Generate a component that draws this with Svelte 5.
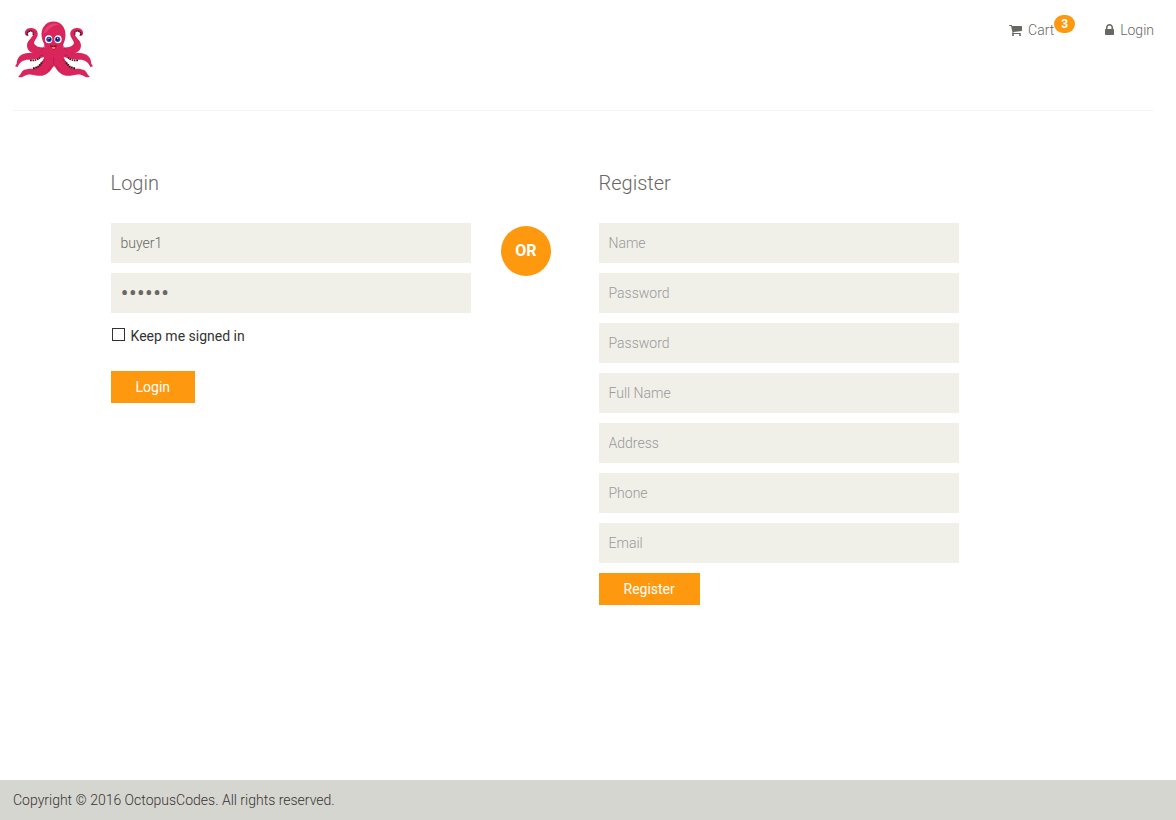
<script lang="ts">
	interface Field {
		name: string;
		label: string;
		type: string;
	}

	const fields: Field[] = [
		{ name: 'username', label: 'Name', type: 'text' },
		{ name: 'password', label: 'Password', type: 'password' },
		{ name: 'confirm', label: 'Password', type: 'password' },
		{ name: 'fullName', label: 'Full Name', type: 'text' },
		{ name: 'address', label: 'Address', type: 'text' },
		{ name: 'phone', label: 'Phone', type: 'text' },
		{ name: 'email', label: 'Email', type: 'email' }
	];

	let username = 'buyer1';
	let password = 'buyer1';
	let keepSignedIn = false;
	let cartCount = 3;
</script>

<div class="page">
	<header class="container">
		<div class="header-middle">
			<a class="logo" href="/" aria-label="Home">
				<svg viewBox="6 3 240 180" width="80" height="60">
					<defs>
						<g id="arms">
							<path fill="#d9245c" d="M104 88C88 90 72 87 67 78C64 70 74 63 77 51C79 38 69 29 56 30C44 30 37 39 39 48C41 53 46 55 50 53C45 48 48 42 55 40C63 40 66 46 62 53C57 62 46 68 45 82C45 97 55 105 72 107L108 112Z" />
							<path fill="none" stroke="#311018" stroke-width="4" stroke-dasharray="4 2" d="M46 51C43 43 51 38 57 39C63 39 65 45 63 50" />
							<path fill="#d9245c" d="M102 94C82 108 66 103 49 105C27 106 15 118 14 137L9 145L17 147C23 132 34 125 49 125C68 126 88 119 108 115Z" />
							<path fill="none" stroke="#481322" stroke-width="5" stroke-dasharray="5 2" d="M54 127Q73 129 84 119" />
							<path fill="#d9245c" d="M102 110C90 128 85 148 66 152C48 152 33 153 28 164C24 172 18 175 19 177C28 181 35 173 46 170C61 167 76 176 91 173C108 169 119 156 126 140V108Z" />
							<path fill="none" stroke="#311018" stroke-width="6" stroke-dasharray="5 2" d="M63 151Q82 149 91 130" />
							<path fill="none" stroke="#a91641" stroke-width="2" d="M84 114Q98 112 103 103M94 132Q101 125 105 116M109 157Q119 146 123 134" />
						</g>
					</defs>
					<use href="#arms" />
					<use href="#arms" transform="translate(252 0) scale(-1 1)" />
					<path fill="#d9245c" d="M99 82C88 65 84 43 95 26C107 5 142 5 154 26C164 43 162 65 152 82L158 112Q149 136 126 146Q102 136 93 112Z" />
					<path fill="#e53e70" d="M101 31Q117 10 141 20Q122 20 106 40Q96 50 95 43Z" />
					<ellipse cx="110" cy="64" rx="11" ry="12" fill="#fff" />
					<ellipse cx="138" cy="64" rx="11" ry="12" fill="#fff" />
					<circle cx="111" cy="64" r="8" fill="#2446ad" />
					<circle cx="137" cy="64" r="8" fill="#2446ad" />
					<circle cx="112" cy="64" r="4" fill="#080b24" />
					<circle cx="136" cy="64" r="4" fill="#080b24" />
					<circle cx="111" cy="62" r="2" fill="#fff" />
					<circle cx="137" cy="62" r="2" fill="#fff" />
					<path fill="#8f1028" d="M114 81Q124 86 134 80Q133 94 125 95Q117 93 114 81Z" />
					<path fill="#ff814b" d="M118 88Q125 84 131 88Q130 94 125 94Q120 94 118 88Z" />
					<path fill="none" stroke="#ae1743" stroke-width="2" d="M99 78Q97 91 87 97M151 78Q154 91 164 97M125 118V141" />
				</svg>
			</a>
			<nav>
				<a href="/cart">
					<svg class="icon" viewBox="64 0 1664 1792" width="13" height="14">
						<path d="M704 1536q0 52-38 90t-90 38-90-38-38-90 38-90 90-38 90 38 38 90zm896 0q0 52-38 90t-90 38-90-38-38-90 38-90 90-38 90 38 38 90zm128-1088v512q0 24-16.5 42.5t-40.5 21.5l-1044 122q13 60 13 70 0 16-24 64h920q26 0 45 19t19 45-19 45-45 19h-1024q-26 0-45-19t-19-45q0-11 8-31.5t16-36 21.5-40 15.5-29.5l-177-823h-204q-26 0-45-19t-19-45 19-45 45-19h256q16 0 28.5 6.5t19.5 15.5 13 24.5 8 26 5.5 29.5 4.5 26h1201q26 0 45 19t19 45z" />
					</svg>
					Cart
					<span class="badge">{cartCount}</span>
				</a>
				<a href="/login">
					<svg class="icon" viewBox="320 0 1152 1792" width="9" height="14">
						<path d="M640 768h512v-192q0-106-75-181t-181-75-181 75-75 181v192zm832 96v576q0 40-28 68t-68 28h-960q-40 0-68-28t-28-68v-576q0-40 28-68t68-28h32v-192q0-184 132-316t316-132 316 132 132 316v192h32q40 0 68 28t28 68z" />
					</svg>
					Login
				</a>
			</nav>
		</div>
	</header>

	<main class="container">
		<div class="row">
			<form class="login-form" on:submit|preventDefault>
				<h2>Login</h2>
				<input type="text" aria-label="Name" bind:value={username} />
				<input class="secret" type="password" aria-label="Password" bind:value={password} />
				<label>
					<input type="checkbox" bind:checked={keepSignedIn} />
					Keep me signed in
				</label>
				<button type="submit">Login</button>
			</form>
			<div class="or">OR</div>
			<form class="signup-form" on:submit|preventDefault>
				<h2>Register</h2>
				{#each fields as field}
					<input type={field.type} name={field.name} placeholder={field.label} aria-label={field.label} />
				{/each}
				<button type="submit">Register</button>
			</form>
		</div>
	</main>

	<footer>
		<p class="container">Copyright © 2016 OctopusCodes. All rights reserved.</p>
	</footer>
</div>

<style>
	:global(body) {
		background: #fff;
		font-family: Roboto, sans-serif;
		font-size: 14px;
		font-weight: 300;
		line-height: 20px;
	}

	.page {
		display: flex;
		flex-direction: column;
		min-height: 100vh;
	}

	.container {
		box-sizing: border-box;
		width: 100%;
		max-width: 1176px;
		margin: 0 auto;
		padding: 0 22px 0 13px;
	}

	.header-middle {
		display: flex;
		justify-content: space-between;
		align-items: flex-start;
		padding: 19px 0 31px;
		border-bottom: 1px solid #f5f5f5;
	}

	.logo svg {
		display: block;
		margin-left: 1px;
	}

	nav {
		display: flex;
		gap: 30px;
		padding-top: 1px;
	}

	nav a {
		display: flex;
		align-items: center;
		color: #696763;
		text-decoration: none;
	}

	.icon {
		margin-right: 6px;
		fill: #696763;
	}

	.badge {
		align-self: flex-start;
		box-sizing: border-box;
		height: 18px;
		margin-top: -5px;
		padding: 0 7px;
		border-radius: 10px;
		background: #fe980f;
		color: #fff;
		font-size: 12px;
		font-weight: 700;
		line-height: 18px;
	}

	main {
		flex: 1;
	}

	.row {
		display: grid;
		grid-template-columns: repeat(12, minmax(0, 1fr));
		column-gap: 30px;
		align-items: start;
		padding: 61px 0 40px;
	}

	form {
		display: flex;
		flex-direction: column;
		align-items: flex-start;
		gap: 10px;
	}

	.login-form {
		grid-column: 2 / span 4;
	}

	.signup-form {
		grid-column: 7 / span 4;
	}

	h2 {
		margin: 0 0 19px;
		color: #696763;
		font-size: 20px;
		font-weight: 300;
		line-height: 22px;
	}

	form > input {
		box-sizing: border-box;
		width: 100%;
		height: 40px;
		padding: 0 10px;
		border: none;
		outline: none;
		background: #f0f0e9;
		color: #696763;
		font: inherit;
	}

	form > .secret {
		font-size: 25px;
	}

	input::placeholder {
		color: #999;
	}

	label {
		display: flex;
		align-items: center;
		gap: 6px;
		padding: 3px 0 15px 1px;
		color: #333;
		font-weight: 400;
	}

	input[type='checkbox'] {
		appearance: none;
		width: 13px;
		height: 13px;
		margin: 0 0 4px;
		border: 1px solid #333;
		background: #fff;
	}

	input[type='checkbox']:checked {
		background: #fe980f;
	}

	button {
		height: 32px;
		padding: 0 25px;
		border: none;
		background: #fe980f;
		color: #fff;
		font: inherit;
		font-weight: 400;
		cursor: pointer;
	}

	.or {
		width: 50px;
		height: 50px;
		margin-top: 54px;
		border-radius: 50%;
		background: #fe980f;
		color: #fff;
		font-size: 16px;
		font-weight: 700;
		line-height: 50px;
		text-align: center;
	}

	footer {
		background: #d6d6d0;
		color: #363432;
	}

	footer p {
		line-height: 40px;
	}
</style>
